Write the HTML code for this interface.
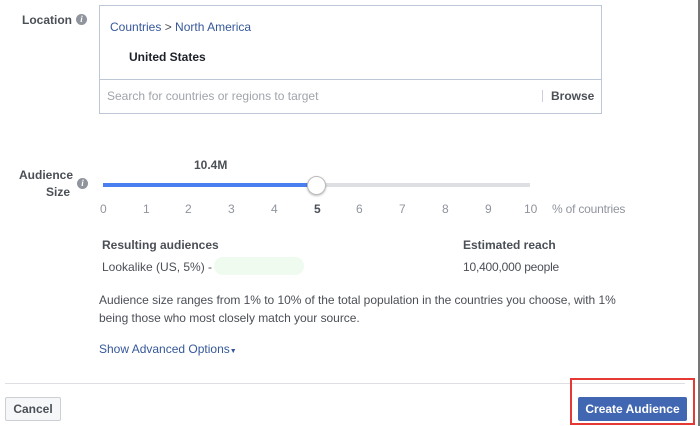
<!DOCTYPE html>
<html><head><style>
body{margin:0;width:700px;height:426px;background:#fff;font-family:"Liberation Sans",Arial,sans-serif;position:relative;overflow:hidden;color:#4b4f56}
.a{position:absolute;white-space:nowrap}
.lbl{font-size:12px;font-weight:bold;color:#4b4f56;text-align:right}
.info{position:absolute;width:11px;height:11px;border-radius:50%;background:#90949c;color:#fff;font-size:9px;font-style:italic;font-weight:bold;text-align:center;line-height:11px;font-family:"Liberation Serif",serif}
.t{font-size:12px;color:#90949c}
</style></head><body>
<div style="position:absolute;right:0;top:0;width:2px;height:426px;background:#777"></div>

<div class="a lbl" style="left:22px;top:13px">Location</div>
<div class="info" style="left:76px;top:14px">i</div>
<div style="position:absolute;left:99px;top:5px;width:501px;height:107px;border:1px solid #bdc7d8"></div>
<div style="position:absolute;left:100px;top:79px;width:501px;height:1px;background:#bdc7d8"></div>
<div class="a" style="left:110px;top:20px;font-size:12px;color:#365899">Countries <span style="color:#4b4f56">&gt;</span> North America</div>
<div class="a" style="left:129px;top:50px;font-size:12px;font-weight:bold;color:#1d2129">United States</div>
<div class="a" style="left:107px;top:89px;font-size:12px;color:#a0a4ab">Search for countries or regions to target</div>
<div style="position:absolute;left:542px;top:90px;width:1px;height:12px;background:#ccd0d8"></div>
<div class="a" style="left:551px;top:89px;font-size:12px;font-weight:bold;color:#4b4f56">Browse</div>

<div class="a lbl" style="left:19px;top:168px">Audience</div>
<div class="a lbl" style="left:46px;top:185px">Size</div>
<div class="info" style="left:77px;top:178px">i</div>
<div class="a" style="left:194px;top:158px;font-size:12px;font-weight:bold;color:#4b4f56">10.4M</div>
<div style="position:absolute;left:103px;top:183px;width:427px;height:4px;background:#dddfe2"></div>
<div style="position:absolute;left:103px;top:183px;width:213px;height:4px;background:#4a7ff0"></div>
<div style="position:absolute;left:307px;top:176px;width:17px;height:17px;border-radius:50%;background:#fff;border:1px solid #bbb;box-shadow:0 1px 2px rgba(0,0,0,.25)"></div>

<div class="a t" style="left:100px;top:202px">0</div>
<div class="a t" style="left:143px;top:202px">1</div>
<div class="a t" style="left:185px;top:202px">2</div>
<div class="a t" style="left:228px;top:202px">3</div>
<div class="a t" style="left:271px;top:202px">4</div>
<div class="a" style="left:314px;top:202px;font-size:12px;font-weight:bold;color:#4b4f56">5</div>
<div class="a t" style="left:356px;top:202px">6</div>
<div class="a t" style="left:399px;top:202px">7</div>
<div class="a t" style="left:442px;top:202px">8</div>
<div class="a t" style="left:485px;top:202px">9</div>
<div class="a t" style="left:524px;top:202px">10</div>
<div class="a t" style="left:552px;top:202px;letter-spacing:-0.2px">% of countries</div>

<div class="a" style="left:102px;top:238px;font-size:12px;font-weight:bold;color:#4b4f56">Resulting audiences</div>
<div class="a" style="left:102px;top:260px;font-size:12px;color:#4b4f56">Lookalike (US, 5%) -</div>
<div style="position:absolute;left:214px;top:257px;width:90px;height:18px;border-radius:9px;background:#eefbee"></div>
<div class="a" style="left:463px;top:238px;font-size:12px;font-weight:bold;color:#4b4f56">Estimated reach</div>
<div class="a" style="left:463px;top:260px;font-size:12px;color:#4b4f56;letter-spacing:-0.2px">10,400,000 people</div>

<div class="a" style="left:99px;top:291px;font-size:12px;line-height:18px;color:#4b4f56;letter-spacing:-0.03px">Audience size ranges from 1% to 10% of the total population in the countries you choose, with 1%<br>being those who most closely match your source.</div>
<div class="a" style="left:99px;top:342px;font-size:12px;color:#365899">Show Advanced Options<span style="font-size:7px">▼</span></div>

<div style="position:absolute;left:5px;top:383px;width:680px;height:1px;background:#dddfe2"></div>
<div style="position:absolute;left:5px;top:397px;width:54px;height:22px;border:1px solid #ccd0d5;border-radius:2px;background:#f6f7f9;font-size:12px;font-weight:bold;color:#4b4f56;text-align:center;line-height:22px">Cancel</div>
<div style="position:absolute;left:578px;top:397px;width:109px;height:24px;background:#4267b2;border-radius:2px;color:#fff;font-size:12px;font-weight:bold;text-align:center;line-height:24px">Create Audience</div>
<div style="position:absolute;left:570px;top:378px;width:121px;height:43px;border:2px solid #e53935"></div>
</body></html>
